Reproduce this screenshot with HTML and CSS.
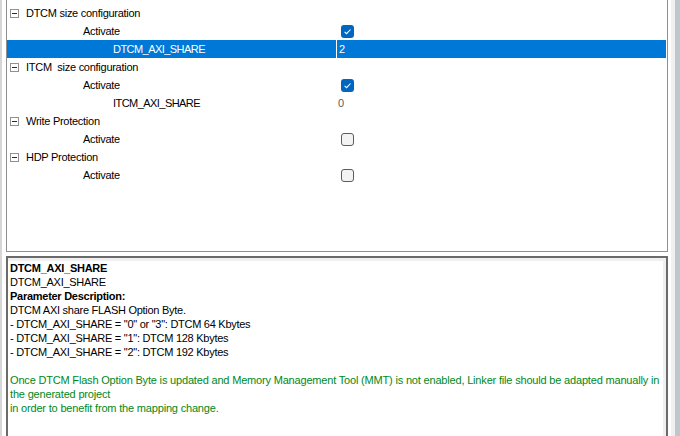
FILE: index.html
```html
<!DOCTYPE html>
<html>
<head>
<meta charset="utf-8">
<link rel="stylesheet" href="styles.css">
</head>
<body>
<div class="screen">
  <div class="gutter"></div>
  <div class="main">
    <div class="tree-panel">
      <div class="tree">
        <div class="row group">
          <div class="name"><span class="toggle"></span><span class="label">DTCM size configuration</span></div>
          <div class="value"></div>
        </div>
        <div class="row l1">
          <div class="name"><span class="label">Activate</span></div>
          <div class="value"><span class="cb checked"><svg viewBox="0 0 13 13" width="13" height="13"><path d="M3.6 6.8 L5.6 8.7 L9.5 4.5" fill="none" stroke="#fff" stroke-width="1.1"/></svg></span></div>
        </div>
        <div class="row l2 selected">
          <div class="name"><span class="label">DTCM_AXI_SHARE</span></div>
          <div class="value"><span class="val">2</span></div>
        </div>
        <div class="row group">
          <div class="name"><span class="toggle"></span><span class="label">ITCM&nbsp; size configuration</span></div>
          <div class="value"></div>
        </div>
        <div class="row l1">
          <div class="name"><span class="label">Activate</span></div>
          <div class="value"><span class="cb checked"><svg viewBox="0 0 13 13" width="13" height="13"><path d="M3.6 6.8 L5.6 8.7 L9.5 4.5" fill="none" stroke="#fff" stroke-width="1.1"/></svg></span></div>
        </div>
        <div class="row l2">
          <div class="name"><span class="label">ITCM_AXI_SHARE</span></div>
          <div class="value"><span class="val muted">0</span></div>
        </div>
        <div class="row group">
          <div class="name"><span class="toggle"></span><span class="label">Write Protection</span></div>
          <div class="value"></div>
        </div>
        <div class="row l1">
          <div class="name"><span class="label">Activate</span></div>
          <div class="value"><span class="cb"></span></div>
        </div>
        <div class="row group">
          <div class="name"><span class="toggle"></span><span class="label">HDP Protection</span></div>
          <div class="value"></div>
        </div>
        <div class="row l1">
          <div class="name"><span class="label">Activate</span></div>
          <div class="value"><span class="cb"></span></div>
        </div>
      </div>
    </div>
    <div class="desc-panel">
      <div class="desc">
        <div class="line bold">DTCM_AXI_SHARE</div>
        <div class="line">DTCM_AXI_SHARE</div>
        <div class="line bold">Parameter Description:</div>
        <div class="line">DTCM AXI share FLASH Option Byte.</div>
        <div class="line">- DTCM_AXI_SHARE = "0" or "3": DTCM 64 Kbytes</div>
        <div class="line">- DTCM_AXI_SHARE = "1": DTCM 128 Kbytes</div>
        <div class="line">- DTCM_AXI_SHARE = "2": DTCM 192 Kbytes</div>
        <div class="line">&nbsp;</div>
        <div class="line green">Once DTCM Flash Option Byte is updated and Memory Management Tool (MMT) is not enabled, Linker file should be adapted manually in</div>
        <div class="line green">the generated project</div>
        <div class="line green">in order to benefit from the mapping change.</div>
      </div>
    </div>
  </div>
  <div class="strip-light"></div>
  <div class="strip-scroll"></div>
</div>
</body>
</html>
```

FILE: styles.css
```css
html, body {
  margin: 0;
  padding: 0;
  background: #ffffff;
}
.screen {
  width: 680px;
  height: 436px;
  overflow: hidden;
  display: flex;
  font-family: "Liberation Sans", Arial, sans-serif;
  font-size: 11px;
  letter-spacing: -0.27px;
  color: #000;
}
.gutter {
  width: 6px;
  flex: none;
  box-sizing: border-box;
  border-left: 2px solid #d6d6d6;
}
.main {
  width: 662px;
  flex: none;
  display: flex;
  flex-direction: column;
}
.tree-panel {
  height: 252px;
  flex: none;
  box-sizing: border-box;
  border: 1px solid #8f8f8f;
  border-top: none;
  padding-top: 4px;
  overflow: hidden;
}
.row {
  display: flex;
  height: 18px;
  line-height: 18px;
  margin-right: 1px;
}
.row .name {
  width: 329px;
  box-sizing: border-box;
  flex: none;
  display: flex;
  align-items: center;
  white-space: nowrap;
}
.row.l2 .label { letter-spacing: -0.55px; }
.row .value {
  flex: 1;
  display: flex;
  align-items: center;
  padding-left: 1px;
}
.row.group .name { padding-left: 3px; }
.row.l1 .name { padding-left: 76px; }
.row.l2 .name { padding-left: 106px; }
.row.selected {
  background: #0078d7;
  color: #fff;
}
.row.selected .value {
  border-left: 1px solid #ffffff;
}
.toggle {
  width: 9px;
  height: 9px;
  box-sizing: border-box;
  border: 1px solid #919191;
  position: relative;
  margin-right: 7px;
  flex: none;
}
.toggle::after {
  content: "";
  position: absolute;
  left: 1px;
  top: 3px;
  width: 5px;
  height: 1px;
  background: #2b2b2b;
}
.val { padding-left: 1px; }
.val.muted { color: #5a5a5a; }
.cb {
  width: 13px;
  height: 13px;
  box-sizing: border-box;
  border-radius: 3px;
  margin-left: 4px;
  border: 1px solid #5c5c5c;
  background: #f3f3f3;
  display: block;
}
.cb.checked {
  border: none;
  background: #0067c0;
}
.cb svg { display: block; }
.desc-panel {
  margin-top: 4px;
  flex: 1;
  box-sizing: border-box;
  border: 2px solid #6b6b6b;
  border-bottom: none;
}
.desc {
  height: 100%;
  box-sizing: border-box;
  border-top: 3px solid #f0f0f0;
  border-right: 3px solid #f0f0f0;
  padding-left: 2px;
}
.line {
  height: 14px;
  line-height: 14px;
  white-space: nowrap;
}
.bold { font-weight: bold; }
.green { color: #00891a; letter-spacing: -0.18px; }
.strip-light {
  width: 4px;
  margin-left: 3px;
  flex: none;
  background: #f0f0f0;
}
.strip-scroll {
  width: 5px;
  flex: none;
  background: #bdc7cc;
}
```
